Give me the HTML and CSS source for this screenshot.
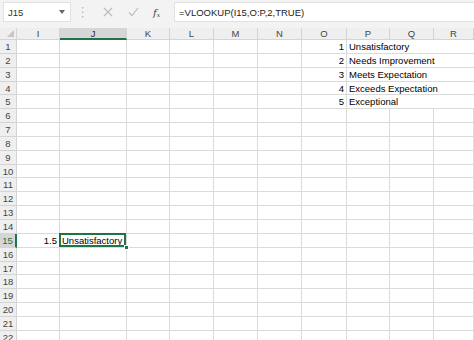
FILE: index.html
```html
<!DOCTYPE html>
<html lang="en">
<head>
  <meta charset="UTF-8" />
  <title>Book1 - Excel</title>
  <link rel="stylesheet" href="styles.css">
</head>
<body>

  <!-- Formula bar -->
  <div class="formula-bar">
    <div class="name-box">
      <span>J15</span>
      <svg class="caret" width="6" height="4" viewBox="0 0 6 4"><path d="M0 0h6L3 4z" fill="#666"/></svg>
    </div>
    <svg class="grip" width="3" height="11" viewBox="0 0 3 11">
      <rect x="1" y="0" width="1.4" height="1.4" fill="#b5b5b5"/>
      <rect x="1" y="4.5" width="1.4" height="1.4" fill="#b5b5b5"/>
      <rect x="1" y="9" width="1.4" height="1.4" fill="#b5b5b5"/>
    </svg>
    <div class="fx-buttons">
      <svg class="btn" width="10" height="10" viewBox="0 0 10 10"><path d="M1 1l8 8M9 1l-8 8" stroke="#bdbdbd" stroke-width="1.2"/></svg>
      <svg class="btn" width="11" height="10" viewBox="0 0 11 10"><path d="M1 5.5l3 3 6-7.5" stroke="#bdbdbd" stroke-width="1.2" fill="none"/></svg>
      <span class="fx">f<sub>x</sub></span>
    </div>
    <div class="formula-input">=VLOOKUP(I15,O:P,2,TRUE)</div>
  </div>

  <!-- Grid -->
  <div class="sheet" id="sheet"></div>

  <script>
    const cols = ['I', 'J', 'K', 'L', 'M', 'N', 'O', 'P', 'Q', 'R'];
    const rowCount = 22;

    // cell values: "COL ROW" -> [text, align]
    const data = {
      'O1': ['1', 'num'], 'P1': ['Unsatisfactory', 'spill'],
      'O2': ['2', 'num'], 'P2': ['Needs Improvement', 'spill'],
      'O3': ['3', 'num'], 'P3': ['Meets Expectation', 'spill'],
      'O4': ['4', 'num'], 'P4': ['Exceeds Expectation', 'spill'],
      'O5': ['5', 'num'], 'P5': ['Exceptional', 'spill'],
      'I15': ['1.5', 'num'], 'J15': ['Unsatisfactory', 'text']
    };

    const sheet = document.getElementById('sheet');

    function cell(cls, text) {
      const d = document.createElement('div');
      d.className = cls;
      if (text) d.textContent = text;
      sheet.appendChild(d);
      return d;
    }

    // header row
    cell('corner');
    cols.forEach(c => cell('col-head' + (c === 'J' ? ' active' : ''), c));

    for (let r = 1; r <= rowCount; r++) {
      cell('row-head' + (r === 15 ? ' active' : ''), String(r));
      for (let i = 0; i < cols.length; i++) {
        const key = cols[i] + r;
        const v = data[key];
        let cls = 'cell';
        if (v) cls += ' ' + v[1];
        if (key === 'J15') cls += ' selected';
        const d = cell(cls, v ? v[0] : '');
        // text in P spills across Q and R
        if (v && v[1] === 'spill') {
          d.style.gridColumn = 'span 3';
          i += 2;
        }
      }
    }
  </script>
</body>
</html>
```

FILE: styles.css
```css
body {
  margin: 0;
  padding: 0;
  width: 474px;
  height: 340px;
  overflow: hidden;
  background: #fff;
  font-family: 'Liberation Sans', Arial, sans-serif;
  color: #000;
}

/* --- Formula bar --- */
.formula-bar {
  display: flex;
  align-items: center;
  height: 28px;
  padding: 2px 0 6px 3px;
  box-sizing: border-box;
  background: #f3f3f3;
}
.name-box {
  display: flex;
  align-items: center;
  justify-content: space-between;
  width: 68px;
  height: 20px;
  padding: 0 5px 0 4px;
  box-sizing: border-box;
  background: #fff;
  border: 1px solid #e1e1e1;
  font-size: 9.5px;
  color: #333;
}
.grip {
  margin-left: 10px;
}
.fx-buttons {
  display: flex;
  align-items: center;
  width: 90px;
  height: 20px;
  padding-left: 19px;
  box-sizing: border-box;
}
.btn {
  margin-right: 15px;
}
.fx {
  margin-left: -1px;
  font-family: 'DejaVu Serif', 'Liberation Serif', serif;
  font-style: italic;
  font-size: 10px;
  color: #444;
}
.fx sub {
  font-size: 6px;
  vertical-align: -1px;
}
.formula-input {
  flex: 1;
  height: 20px;
  line-height: 19px;
  padding-left: 4px;
  box-sizing: border-box;
  background: #fff;
  border: 1px solid #e1e1e1;
  border-right: none;
  font-size: 9.5px;
  color: #222;
}

/* --- Sheet grid --- */
.sheet {
  display: grid;
  grid-template-columns: 17px 43px 67px 43px 44px 44px 44px 45px 43px 44px 40px;
  grid-template-rows: 12px repeat(22, 13.85px);
  font-size: 9.5px;
}
.corner, .col-head, .row-head {
  background: #efefef;
  color: #444;
  border-right: 1px solid #d4d4d4;
  border-bottom: 1px solid #d4d4d4;
  box-sizing: border-box;
}
.corner {
  position: relative;
}
.corner::after {
  content: '';
  position: absolute;
  right: 2px;
  bottom: 2px;
  border-left: 7px solid transparent;
  border-bottom: 7px solid #c6c6c6;
}
.col-head {
  text-align: center;
  line-height: 12px;
}
.col-head.active {
  background: #d6d6d6;
  color: #2d2d2d;
  border-bottom: 2px solid #217346;
}
.row-head {
  text-align: center;
  line-height: 13px;
}
.row-head.active {
  background: #d6d6d6;
  color: #217346;
  border-right: 2px solid #217346;
}
.cell {
  border-right: 1px solid #dadada;
  border-bottom: 1px solid #dadada;
  box-sizing: border-box;
  line-height: 13px;
  padding: 0 2px;
  white-space: nowrap;
  overflow: visible;
}
.cell.num {
  text-align: right;
}
.cell.spill {
  border-right: none;
}
.cell.selected {
  position: relative;
}
.cell.selected::after {
  content: '';
  position: absolute;
  left: -1px;
  top: -1px;
  right: 0;
  bottom: 0;
  border: 2px solid #217346;
}
.cell.selected::before {
  content: '';
  position: absolute;
  right: -3px;
  bottom: -3px;
  width: 5px;
  height: 5px;
  background: #217346;
  border: 1px solid #fff;
  box-sizing: border-box;
  z-index: 1;
}
```
